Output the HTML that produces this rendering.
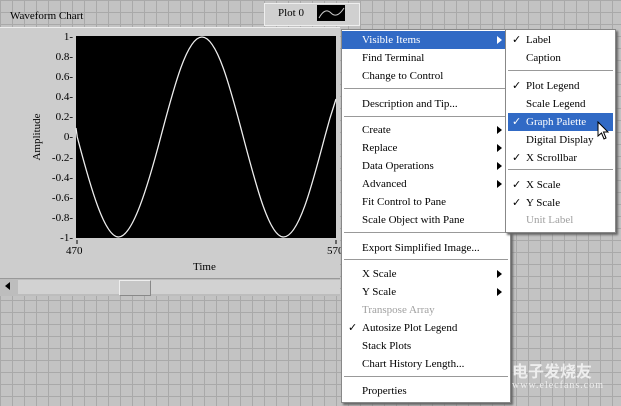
<!DOCTYPE html>
<html><head><style>
body{margin:0;width:621px;height:406px;overflow:hidden;position:relative;font-family:"Liberation Serif",serif;font-size:11px;color:#000;
background-color:#c3c3c3;background-image:linear-gradient(#a9a9a9 1px,transparent 1px),linear-gradient(90deg,#a9a9a9 1px,transparent 1px);background-size:12px 12px;}
.a{position:absolute;white-space:nowrap}
.menu{position:absolute;background:#fff;border:1px solid #888;box-shadow:2px 2px 2px #666;}
.it{position:absolute;left:0;right:0;height:18px;line-height:18px}
.it span{position:absolute;left:20px}
.hl{background:#316ac5;color:#fff}
.sep{position:absolute;left:2px;right:2px;border-top:1px solid #999;border-bottom:1px solid #fff}
.ar{position:absolute;right:8px;top:5px;width:0;height:0;border-left:5px solid #000;border-top:4px solid transparent;border-bottom:4px solid transparent}
.ck{position:absolute;left:6px}
.dis{color:#a0a0a0}
</style></head><body>
<div class="a" style="left:10px;top:10px">Waveform Chart</div>
<div class="a" style="left:264px;top:3px;width:94px;height:21px;background:#d0d0d0;border:1px solid #eee"></div>
<div class="a" style="left:278px;top:7px">Plot 0</div>
<div class="a" style="left:317px;top:5px;width:28px;height:16px;background:#000"></div>
<svg class="a" style="left:317px;top:5px" width="28" height="16"><path d="M2 13 Q8 2 14 8 T27 3" stroke="#ccc" fill="none"/></svg>
<div class="a" style="left:0;top:27px;width:340px;height:253px;background:#cdcdcd;border-top:1px solid #eee"></div>
<div class="a" style="left:76px;top:36px;width:260px;height:202px;background:#000"></div>
<div class="a" style="left:37px;top:137px;transform:translate(-50%,-50%) rotate(-90deg);transform-origin:center">Amplitude</div>
<div class="a" style="left:40px;top:27px;width:33px;text-align:right;line-height:20.1px">1-<br>0.8-<br>0.6-<br>0.4-<br>0.2-<br>0-<br>-0.2-<br>-0.4-<br>-0.6-<br>-0.8-<br>-1-</div>
<div class="a" style="left:66px;top:245px">470</div>
<div class="a" style="left:327px;top:245px">570</div>
<div class="a" style="left:193px;top:261px">Time</div>
<svg class="a" style="left:0;top:0" width="340" height="260"><path d="M76 128 L77.25 137 C90.7 188.2 104.6 237 118.5 237 C132.4 237 147.3 188.2 160.75 137 C174.2 85.8 187.1 37 202 37 C216.9 37 229.8 85.8 243.25 137 C256.7 188.2 269.6 237 283.5 237 C298.4 237 311.3 188.2 324.75 137 L330 118 L336 99" stroke="#eee" stroke-width="1.3" fill="none"/>
<path d="M77 240v4M336 240v4" stroke="#000"/></svg>
<div class="a" style="left:0;top:278px;width:340px;height:17px;background:#bdbdbd;border-top:1px solid #999"></div>
<div class="a" style="left:5px;top:282px;width:0;height:0;border-right:5px solid #000;border-top:4px solid transparent;border-bottom:4px solid transparent"></div>
<div class="a" style="left:18px;top:280px;width:322px;height:14px;background:#d2d2d2"></div>
<div class="a" style="left:119px;top:280px;width:30px;height:14px;background:#c6c6c6;border:1px solid #888;border-top-color:#eee;border-left-color:#eee"></div>

<div class="menu" style="left:341px;top:29px;width:168px;height:372px">
<div class="it hl" style="top:1px"><span>Visible Items</span><i class="ar" style="border-left-color:#fff"></i></div>
<div class="it" style="top:19px"><span>Find Terminal</span></div>
<div class="it" style="top:37px"><span>Change to Control</span></div>
<div class="sep" style="top:58px"></div>
<div class="it" style="top:65px"><span>Description and Tip...</span></div>
<div class="sep" style="top:86px"></div>
<div class="it" style="top:91px"><span>Create</span><i class="ar"></i></div>
<div class="it" style="top:109px"><span>Replace</span><i class="ar"></i></div>
<div class="it" style="top:127px"><span>Data Operations</span><i class="ar"></i></div>
<div class="it" style="top:145px"><span>Advanced</span><i class="ar"></i></div>
<div class="it" style="top:163px"><span>Fit Control to Pane</span></div>
<div class="it" style="top:181px"><span>Scale Object with Pane</span></div>
<div class="sep" style="top:202px"></div>
<div class="it" style="top:209px"><span>Export Simplified Image...</span></div>
<div class="sep" style="top:229px"></div>
<div class="it" style="top:235px"><span>X Scale</span><i class="ar"></i></div>
<div class="it" style="top:253px"><span>Y Scale</span><i class="ar"></i></div>
<div class="it dis" style="top:271px"><span>Transpose Array</span></div>
<div class="it" style="top:289px"><b class="ck" style="font-weight:normal">✓</b><span>Autosize Plot Legend</span></div>
<div class="it" style="top:307px"><span>Stack Plots</span></div>
<div class="it" style="top:325px"><span>Chart History Length...</span></div>
<div class="sep" style="top:346px"></div>
<div class="it" style="top:352px"><span>Properties</span></div>
</div>

<div class="menu" style="left:505px;top:29px;width:109px;height:202px">
<div class="it" style="top:1px"><b class="ck" style="font-weight:normal">✓</b><span>Label</span></div>
<div class="it" style="top:19px"><span>Caption</span></div>
<div class="sep" style="top:40px"></div>
<div class="it" style="top:47px"><b class="ck" style="font-weight:normal">✓</b><span>Plot Legend</span></div>
<div class="it" style="top:65px"><span>Scale Legend</span></div>
<div class="it hl" style="top:83px;left:2px;right:2px"><b class="ck" style="font-weight:normal;left:4px">✓</b><span style="left:18px">Graph Palette</span></div>
<div class="it" style="top:101px"><span>Digital Display</span></div>
<div class="it" style="top:119px"><b class="ck" style="font-weight:normal">✓</b><span>X Scrollbar</span></div>
<div class="sep" style="top:139px"></div>
<div class="it" style="top:146px"><b class="ck" style="font-weight:normal">✓</b><span>X Scale</span></div>
<div class="it" style="top:164px"><b class="ck" style="font-weight:normal">✓</b><span>Y Scale</span></div>
<div class="it dis" style="top:181px"><span>Unit Label</span></div>
</div>
<svg class="a" style="left:597px;top:121px" width="14" height="20"><path d="M1 1 L1 15 L4.5 12 L7 18 L9 17 L6.5 11 L11 11 Z" fill="#fff" stroke="#000"/></svg>
<div class="a" style="left:512px;top:358px;color:#eee;font-family:'Noto Sans CJK SC',sans-serif;font-size:16px;font-weight:bold">电子发烧友</div>
<div class="a" style="left:512px;top:380px;color:#eee;font-size:10px;letter-spacing:1px">www.elecfans.com</div>
</body></html>
